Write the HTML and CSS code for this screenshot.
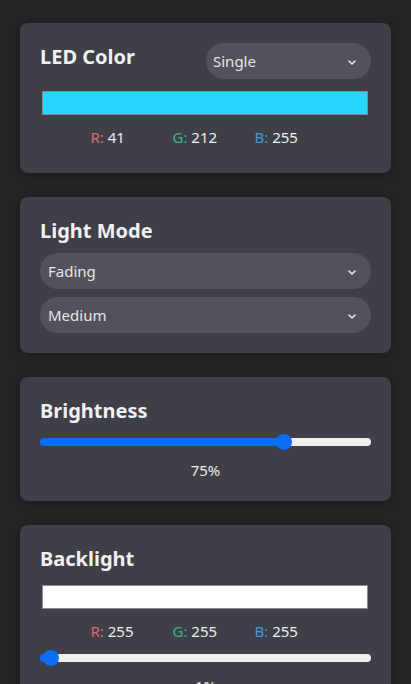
FILE: index.html
```html
<!DOCTYPE html>
<html>
<head>
<meta charset="utf-8">
<link rel="stylesheet" href="styles.css">
</head>
<body>
<main class="page">
  <section class="card">
    <div class="card-head">
      <h2 class="title">LED Color</h2>
      <div class="select select-small">
        <span>Single</span>
        <svg class="chev" width="8" height="5" viewBox="0 0 8 5"><path d="M1 1l3 3 3-3" fill="none" stroke="#e8e8e8" stroke-width="1.6" stroke-linecap="round" stroke-linejoin="round"/></svg>
      </div>
    </div>
    <div class="swatch" style="background:#29d4ff"></div>
    <div class="rgb rgb-last">
      <span class="ch"><span class="lbl r">R:</span> 41</span>
      <span class="ch"><span class="lbl g">G:</span> 212</span>
      <span class="ch"><span class="lbl b">B:</span> 255</span>
    </div>
  </section>

  <section class="card">
    <h2 class="title mb8">Light Mode</h2>
    <div class="select">
      <span>Fading</span>
      <svg class="chev" width="8" height="5" viewBox="0 0 8 5"><path d="M1 1l3 3 3-3" fill="none" stroke="#e8e8e8" stroke-width="1.6" stroke-linecap="round" stroke-linejoin="round"/></svg>
    </div>
    <div class="select mt8">
      <span>Medium</span>
      <svg class="chev" width="8" height="5" viewBox="0 0 8 5"><path d="M1 1l3 3 3-3" fill="none" stroke="#e8e8e8" stroke-width="1.6" stroke-linecap="round" stroke-linejoin="round"/></svg>
    </div>
  </section>

  <section class="card">
    <h2 class="title mb9">Brightness</h2>
    <input class="slider" type="range" min="0" max="100" value="75" style="--v:0.75">
    <div class="pct">75%</div>
  </section>

  <section class="card">
    <h2 class="title mb12">Backlight</h2>
    <div class="swatch swatch-white" style="background:#ffffff"></div>
    <div class="rgb">
      <span class="ch"><span class="lbl r">R:</span> 255</span>
      <span class="ch"><span class="lbl g">G:</span> 255</span>
      <span class="ch"><span class="lbl b">B:</span> 255</span>
    </div>
    <input class="slider slider-mt" type="range" min="0" max="100" value="1" style="--v:0.01">
    <div class="pct">1%</div>
  </section>
</main>
</body>
</html>
```

FILE: styles.css
```css
* { box-sizing: border-box; }
html, body {
  margin: 0;
  background: #232326;
}
body {
  font-family: "Noto Sans", "Open Sans", sans-serif;
  color: #e8e8e8;
}
.page {
  display: flex;
  flex-direction: column;
  gap: 24px;
  padding: 23px 20px;
}
.card {
  background: #3f4047;
  border-radius: 8px;
  padding: 20px;
  box-shadow: 0 2px 8px rgba(0, 0, 0, 0.25);
  display: flex;
  flex-direction: column;
}
.card-head {
  display: flex;
  justify-content: space-between;
  align-items: flex-start;
  margin-bottom: 12px;
}
.title {
  margin: 0;
  font-size: 20px;
  line-height: 28px;
  font-weight: 700;
  color: #f0f0f2;
}
.mb8 { margin-bottom: 8px; }
.mb9 { margin-bottom: 9px; }
.mb12 { margin-bottom: 12px; }
.mt8 { margin-top: 8px; }
.select {
  height: 36px;
  border-radius: 18px;
  background: #51525b;
  display: flex;
  align-items: center;
  justify-content: space-between;
  padding: 0 15px 0 8px;
  font-size: 15px;
  color: #e6e6e8;
}
.select-small {
  width: 165px;
  padding-left: 7px;
}
.chev { display: block; margin-top: 2px; }
.swatch {
  height: 24px;
  margin: 0 3px 0 2px;
  border: 1px solid #7e8a90;
}
.swatch-white { border-color: #8a8a8e; }
.rgb {
  display: flex;
  justify-content: center;
  margin-top: 11px;
  font-size: 15px;
  line-height: 22px;
  color: #ececee;
}
.rgb-last { margin-bottom: 5px; }
.ch {
  width: 82px;
  padding-left: 8px;
}
.lbl.r { color: #d9686f; }
.lbl.g { color: #39b287; }
.lbl.b { color: #3c9ad4; }
.slider {
  -webkit-appearance: none;
  appearance: none;
  width: 100%;
  height: 16px;
  margin: 0;
  background: transparent;
}
.slider::-webkit-slider-runnable-track {
  height: 8px;
  border-radius: 4px;
  background: linear-gradient(to right,
    #0b6ef5 calc(8px + (100% - 16px) * var(--v)),
    #efeff0 calc(8px + (100% - 16px) * var(--v)));
}
.slider::-webkit-slider-thumb {
  -webkit-appearance: none;
  appearance: none;
  width: 16px;
  height: 16px;
  margin-top: -4px;
  border: none;
  border-radius: 50%;
  background: #0b6ef5;
}
.slider-mt { margin-top: 8px; }
.pct {
  margin-top: 9px;
  text-align: center;
  font-size: 15px;
  line-height: 22px;
  color: #ececee;
}
```
